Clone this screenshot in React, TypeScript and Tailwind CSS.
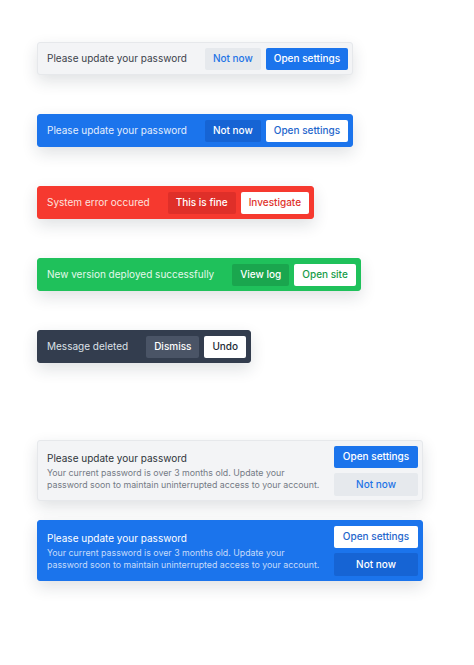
import React from "react";

/* ─── Types ─── */
type Tone = "light" | "blue" | "red" | "green" | "dark";

type ToastProps = {
  tone: Tone;
  message: string;
  secondary: string;
  primary: string;
};

const tones: Record<Tone, { box: string; text: string; sec: string; pri: string }> = {
  light: {
    box: "bg-[#f3f4f6] border border-[#e6e8eb]",
    text: "text-[#3c424b]",
    sec: "bg-[#e6e9ed] text-[#1f74e6]",
    pri: "bg-[#1b74ec] text-white",
  },
  blue: {
    box: "bg-[#1b74ec] border border-[#1b74ec]",
    text: "text-[#e3eefc]",
    sec: "bg-[#1664d4] text-white",
    pri: "bg-white text-[#1f66cc]",
  },
  red: {
    box: "bg-[#f6392f] border border-[#f6392f]",
    text: "text-[#fde2df]",
    sec: "bg-[#df2f29] text-white",
    pri: "bg-white text-[#e0322b]",
  },
  green: {
    box: "bg-[#1fc15b] border border-[#1fc15b]",
    text: "text-[#e4f8eb]",
    sec: "bg-[#1aa64e] text-white",
    pri: "bg-white text-[#169c48]",
  },
  dark: {
    box: "bg-[#333d4e] border border-[#333d4e]",
    text: "text-[#dde1e7]",
    sec: "bg-[#4a5466] text-white",
    pri: "bg-white text-[#222a36]",
  },
};

/* ─── Single-line toast ─── */
function Toast({ tone, message, secondary, primary }: ToastProps) {
  const t = tones[tone];
  return (
    <div
      className={`flex h-[33px] items-center rounded-[3px] pl-[9px] pr-[4px] shadow-[0_6px_16px_rgba(30,40,60,0.14)] ${t.box}`}
    >
      <p className={`text-[10px] ${t.text}`}>{message}</p>
      <div className="ml-[18px] flex gap-[5px]">
        <button className={`h-[22px] rounded-[2px] px-[8px] text-[10px] font-medium ${t.sec}`}>
          {secondary}
        </button>
        <button className={`h-[22px] rounded-[2px] px-[8px] text-[10px] font-medium ${t.pri}`}>
          {primary}
        </button>
      </div>
    </div>
  );
}

/* ─── Two-line toast ─── */
function DetailToast({ tone }: { tone: "light" | "blue" }) {
  const t = tones[tone];
  const title = tone === "light" ? "text-[#2f343b]" : "text-white";
  const desc = tone === "light" ? "text-[#737a85]" : "text-[#c6dbfa]";
  return (
    <div
      className={`flex h-[61px] w-[386px] items-center rounded-[3px] pl-[9px] pr-[4px] shadow-[0_6px_16px_rgba(30,40,60,0.14)] ${t.box}`}
    >
      <div className="flex-1">
        <p className={`text-[10px] leading-[14px] ${title}`}>Please update your password</p>
        <p className={`mt-[2px] text-[8.8px] leading-[12px] ${desc}`}>
          Your current password is over 3 months old. Update your
          <br />
          password soon to maintain uninterrupted access to your account.
        </p>
      </div>
      <div className="flex w-[84px] flex-col gap-[5px]">
        <button className={`h-[22px] rounded-[2px] text-[10px] font-medium ${t.pri}`}>Open settings</button>
        <button className={`h-[23px] rounded-[2px] text-[10px] font-medium ${t.sec}`}>Not now</button>
      </div>
    </div>
  );
}

export default function App() {
  return (
    <div
      className="min-h-[665px] w-[474px] bg-white pl-[37px] pt-[42px]"
      style={{ fontFamily: "Inter, 'Noto Sans', sans-serif" }}
    >
      <div className="flex flex-col items-start gap-[39px]">
        <Toast tone="light" message="Please update your password" secondary="Not now" primary="Open settings" />
        <Toast tone="blue" message="Please update your password" secondary="Not now" primary="Open settings" />
        <Toast tone="red" message="System error occured" secondary="This is fine" primary="Investigate" />
        <Toast tone="green" message="New version deployed successfully" secondary="View log" primary="Open site" />
        <Toast tone="dark" message="Message deleted" secondary="Dismiss" primary="Undo" />
      </div>
      <div className="mt-[77px] flex flex-col items-start gap-[19px]">
        <DetailToast tone="light" />
        <DetailToast tone="blue" />
      </div>
    </div>
  );
}
